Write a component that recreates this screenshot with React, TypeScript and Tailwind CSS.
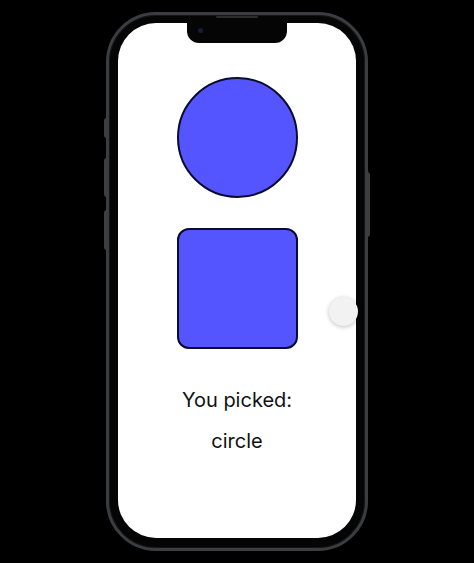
export default function App() {
  return (
    <div className="w-full h-[563px] bg-black flex items-center justify-center">
      {/* Phone */}
      <div className="relative w-[262px] h-[539px] rounded-[50px] bg-[#050505] border-[3px] border-[#3b3e41] p-[9px] pt-[8px] pb-[10px] shadow-[inset_0_0_0_1px_#151515]">
        {/* side buttons */}
        <div className="absolute left-[-5px] top-[103px] w-[3px] h-[20px] rounded-l-sm bg-[#3c3f42]" />
        <div className="absolute left-[-5px] top-[143px] w-[3px] h-[39px] rounded-l-sm bg-[#3c3f42]" />
        <div className="absolute left-[-5px] top-[195px] w-[3px] h-[40px] rounded-l-sm bg-[#3c3f42]" />
        <div className="absolute right-[-5px] top-[157px] w-[3px] h-[65px] rounded-r-sm bg-[#3c3f42]" />
        {/* speaker */}
        <div className="absolute left-1/2 -translate-x-1/2 top-[1px] w-[42px] h-[2px] rounded-full bg-[#2a2c2e]" />

        {/* Screen */}
        <div className="relative h-full w-full rounded-[38px] bg-white overflow-hidden flex flex-col items-center">
          {/* notch */}
          <div className="absolute left-1/2 -translate-x-1/2 top-0 w-[100px] h-[20px] bg-[#050505] rounded-b-[12px]">
            <div className="absolute left-[11px] top-[5px] w-[5px] h-[5px] rounded-full bg-[#1a1a3a]" />
          </div>

          <div className="mt-[54px] w-[121px] h-[121px] rounded-full bg-[#5555ff] border-2 border-[#0b0b2e]" />
          <div className="mt-[30px] w-[121px] h-[121px] rounded-[12px] bg-[#5555ff] border-2 border-[#0b0b2e]" />

          <div className="mt-[37px] flex flex-col items-center gap-[13px] font-['Inter',sans-serif] text-[20px] leading-[28px] text-[#111]">
            <p>You picked:</p>
            <p>circle</p>
          </div>
        </div>

        {/* floating knob */}
        <div className="absolute right-[7px] top-[282px] w-[29px] h-[29px] rounded-full bg-[#f2f2f2] shadow-[0_1px_4px_rgba(0,0,0,0.25)]" />
      </div>
    </div>
  );
}
